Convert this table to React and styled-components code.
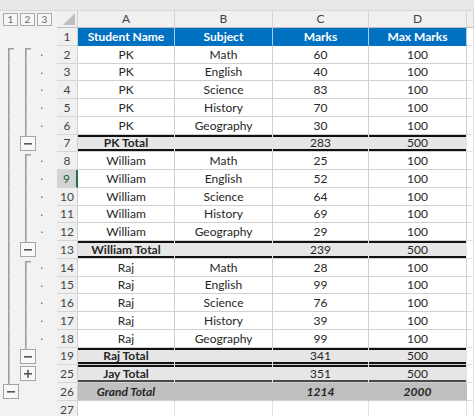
import React from "react";
import styled, { createGlobalStyle } from "styled-components";

const GlobalStyle = createGlobalStyle`
  html, body {
    margin: 0;
    padding: 0;
    background: #ffffff;
  }
  body {
    font-family: Lato, "Open Sans", "Liberation Sans", sans-serif;
  }
`;

const OUTLINE_W = 57;
const ROWHEAD_W = 21;
const COLS = [97, 98, 96, 98];
const ROW_H = 17.75;

const Sheet = styled.div`
  width: 474px;
  height: 416px;
  overflow: hidden;
  background: #f2f2f2;
  display: flex;
  flex-direction: column;
`;

const TopStrip = styled.div`
  height: 11px;
  flex: none;
  background: #e8e8e8;
  border-bottom: 1px solid #d9d9d9;
  box-sizing: border-box;
`;

const HeaderRow = styled.div`
  display: flex;
  height: 17px;
  flex: none;
`;

const LevelBar = styled.div`
  width: ${OUTLINE_W}px;
  flex: none;
  display: flex;
  align-items: center;
  gap: 2px;
  padding-left: 3px;
  box-sizing: border-box;
  background: #f2f2f2;
`;

const LevelButton = styled.button`
  width: 15px;
  height: 13px;
  padding: 0;
  margin: 0;
  border: 1px solid #a9a9a9;
  background: #f6f6f6;
  color: #6a6a6a;
  font-family: inherit;
  font-size: 10px;
  line-height: 11px;
  text-align: center;
`;

const Corner = styled.div`
  width: ${ROWHEAD_W}px;
  flex: none;
  display: flex;
  align-items: flex-end;
  justify-content: flex-end;
  padding: 0 2px 2px 0;
  box-sizing: border-box;
  background: #f0f0f0;
  border-right: 1px solid #cfcfcf;
  border-bottom: 1px solid #bdbdbd;
`;

const ColHead = styled.div`
  width: ${(p) => (p.$w ? `${p.$w}px` : "auto")};
  flex: ${(p) => (p.$w ? "none" : "1")};
  box-sizing: border-box;
  background: #f0f0f0;
  border-right: 1px solid #d4d4d4;
  border-bottom: 1px solid #bdbdbd;
  color: #444444;
  font-size: 12px;
  line-height: 16px;
  text-align: center;
`;

const Row = styled.div`
  display: flex;
  height: ${ROW_H}px;
  flex: none;
`;

const OutlineCell = styled.div`
  width: ${OUTLINE_W}px;
  flex: none;
  height: 100%;
  background: #f2f2f2;

  svg {
    display: block;
  }
`;

const RowHead = styled.div`
  width: ${ROWHEAD_W}px;
  flex: none;
  box-sizing: border-box;
  background: ${(p) => (p.$selected ? "#d3d3d3" : "#f0f0f0")};
  border-bottom: 1px solid #d6d6d6;
  border-right: ${(p) => (p.$selected ? "2px solid #217346" : "1px solid #cfcfcf")};
  color: ${(p) => (p.$selected ? "#1d5e3a" : "#444444")};
  font-size: 12px;
  display: flex;
  align-items: center;
  justify-content: center;
`;

const cellBg = {
  head: "#0070c0",
  data: "#ffffff",
  total: "#e7e6e6",
  grand: "#bfbfbf",
  empty: "#ffffff",
};

const Cell = styled.div`
  width: ${(p) => (p.$w ? `${p.$w}px` : "auto")};
  flex: ${(p) => (p.$w ? "none" : "1")};
  box-sizing: border-box;
  background: ${(p) => cellBg[p.$kind]};
  color: ${(p) => (p.$kind === "head" ? "#ffffff" : "#262626")};
  font-size: 12px;
  font-weight: ${(p) => (p.$kind === "head" || p.$bold ? 700 : 400)};
  font-style: ${(p) => (p.$italic ? "italic" : "normal")};
  border-bottom: 1px solid
    ${(p) => (p.$kind === "head" ? "#0070c0" : p.$kind === "empty" ? "#e1e1e1" : "#d0d0d0")};
  border-right: 1px solid
    ${(p) =>
      p.$kind === "head"
        ? "#a9cdea"
        : p.$kind === "total" || p.$kind === "grand"
        ? "transparent"
        : p.$kind === "empty"
        ? "#e1e1e1"
        : "#d0d0d0"};
  box-shadow: ${(p) =>
    p.$kind === "total"
      ? `inset 0 2px 0 #111111, inset 0 -2px 0 ${p.$lastTotal ? "#4a4a4a" : "#111111"}`
      : "none"};
  display: flex;
  align-items: center;
  justify-content: center;
  white-space: nowrap;
  overflow: hidden;
`;

const LINE = "#9c9c9c";

const OutlineMarks = ({ l1, l2, dot }) => (
  <svg width={OUTLINE_W} height={ROW_H} viewBox={`0 0 ${OUTLINE_W} ${ROW_H}`}>
    {l1 === "start" && (
      <>
        <rect x="8" y="2" width="1.6" height={ROW_H - 2} fill={LINE} />
        <rect x="8" y="2" width="6" height="1.4" fill={LINE} />
      </>
    )}
    {l1 === "line" && <rect x="8" y="0" width="1.6" height={ROW_H} fill={LINE} />}
    {l1 === "minus" && (
      <>
        <rect x="8" y="0" width="1.6" height="2" fill={LINE} />
        <rect x="3.5" y="1.5" width="15" height="14" fill="#f7f7f7" stroke="#a3a3a3" />
        <rect x="7" y="8" width="8" height="1.6" fill="#555555" />
      </>
    )}
    {l2 === "start" && (
      <>
        <rect x="25" y="2" width="1.6" height={ROW_H - 2} fill={LINE} />
        <rect x="25" y="2" width="6" height="1.4" fill={LINE} />
      </>
    )}
    {l2 === "line" && <rect x="25" y="0" width="1.6" height={ROW_H} fill={LINE} />}
    {(l2 === "minus" || l2 === "plus") && (
      <>
        {l2 === "minus" && <rect x="25" y="0" width="1.6" height="2" fill={LINE} />}
        <rect x="20.5" y="1.5" width="15" height="14" fill="#f7f7f7" stroke="#a3a3a3" />
        <rect x="24" y="8" width="8" height="1.6" fill="#555555" />
        {l2 === "plus" && <rect x="27.2" y="4.8" width="1.6" height="8" fill="#555555" />}
      </>
    )}
    {dot && <rect x="41" y="8.5" width="1.5" height="1.5" fill="#7d7d7d" />}
  </svg>
);

const detail = (n, name, subject, marks, first) => ({
  n,
  kind: "data",
  cells: [name, subject, marks, "100"],
  out: { l1: n === 2 ? "start" : "line", l2: first ? "start" : "line", dot: true },
});

const group = (start, name, marks) => [
  detail(start, name, "Math", marks[0], true),
  detail(start + 1, name, "English", marks[1]),
  detail(start + 2, name, "Science", marks[2]),
  detail(start + 3, name, "History", marks[3]),
  detail(start + 4, name, "Geography", marks[4]),
];

const rows = [
  { n: 1, kind: "head", cells: ["Student Name", "Subject", "Marks", "Max Marks"], out: {} },
  ...group(2, "PK", ["60", "40", "83", "70", "30"]),
  { n: 7, kind: "total", cells: ["PK Total", "", "283", "500"], out: { l1: "line", l2: "minus" } },
  ...group(8, "William", ["25", "52", "64", "69", "29"]),
  { n: 13, kind: "total", cells: ["William Total", "", "239", "500"], out: { l1: "line", l2: "minus" } },
  ...group(14, "Raj", ["28", "99", "76", "39", "99"]),
  { n: 19, kind: "total", cells: ["Raj Total", "", "341", "500"], out: { l1: "line", l2: "minus" } },
  { n: 25, kind: "total", last: true, cells: ["Jay Total", "", "351", "500"], out: { l1: "line", l2: "plus" } },
  { n: 26, kind: "grand", cells: ["Grand Total", "", "1214", "2000"], out: { l1: "minus" } },
  { n: 27, kind: "empty", cells: ["", "", "", ""], out: {} },
];

const App = () => (
  <>
    <GlobalStyle />
    <Sheet>
      <TopStrip />
      <HeaderRow>
        <LevelBar>
          <LevelButton>1</LevelButton>
          <LevelButton>2</LevelButton>
          <LevelButton>3</LevelButton>
        </LevelBar>
        <Corner>
          <svg width="12" height="12" viewBox="0 0 12 12">
            <polygon points="12,0 12,12 0,12" fill="#bfbfbf" />
          </svg>
        </Corner>
        {["A", "B", "C", "D"].map((c, i) => (
          <ColHead key={c} $w={COLS[i]}>
            {c}
          </ColHead>
        ))}
        <ColHead />
      </HeaderRow>
      {rows.map((r) => (
        <Row key={r.n}>
          <OutlineCell>
            <OutlineMarks {...r.out} />
          </OutlineCell>
          <RowHead $selected={r.n === 9}>{r.n}</RowHead>
          {r.cells.map((text, i) => (
            <Cell
              key={i}
              $w={COLS[i]}
              $kind={r.kind}
              $bold={(r.kind === "total" && i === 0) || r.kind === "grand"}
              $italic={r.kind === "grand"}
              $lastTotal={r.last}
            >
              {text}
            </Cell>
          ))}
          <Cell $kind="empty" />
        </Row>
      ))}
    </Sheet>
  </>
);

export default App;
